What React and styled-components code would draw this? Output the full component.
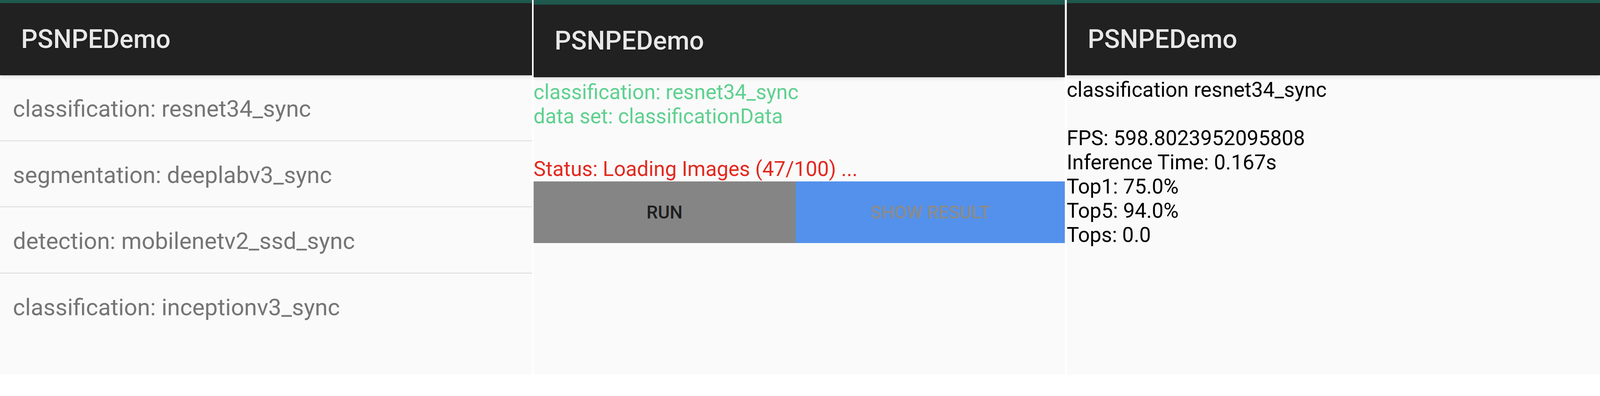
import React from 'react';
import styled, { createGlobalStyle } from 'styled-components';

// the shot is 4332 px wide: size everything against the viewport width
const px = n => `${(n * 100 / 4332).toFixed(4)}vw`;

const GlobalStyle = createGlobalStyle`
    html, body {
        margin: 0;
        padding: 0;
        background: #ffffff;
        overflow: hidden;
    }
    body {
        font-family: Roboto, "Noto Sans", sans-serif;
    }
`

const Screens = styled.div`
    display: grid;
    grid-template-columns: 1440fr 1439fr 1444fr;
    column-gap: ${px(4.5)};
    width: 100%;
    height: ${px(1015)};
    overflow: hidden;
`
const Phone = styled.div`
    display: flex;
    flex-direction: column;
    min-width: 0;
    background: #fafafa;
    height: ${px(1015)};
    overflow: hidden;
`
const StatusStrip = styled.div`
    height: ${props => px(props.h)};
    flex-shrink: 0;
    background: #1f5a4f;
`
const Toolbar = styled.div`
    position: relative;
    z-index: 1;
    height: ${px(196)};
    flex-shrink: 0;
    display: flex;
    align-items: center;
    padding-left: ${px(57)};
    background: #212121;
    box-shadow: 0 ${px(4)} ${px(10)} rgba(0, 0, 0, 0.12);
`
const Title = styled.h1`
    margin: 0;
    font-family: Roboto, sans-serif;
    font-weight: 500;
    font-size: ${px(70)};
    color: #e8e8e8;
    text-shadow: 0 ${px(2)} ${px(3)} rgba(0, 0, 0, 0.35);
`
const ModelList = styled.ul`
    margin: 0;
    padding: 0;
    list-style: none;
`
const ModelRow = styled.li`
    height: ${px(179)};
    display: flex;
    align-items: center;
    padding: ${px(6)} 0 0 ${px(35)};
    box-sizing: border-box;
    font-size: ${px(63)};
    color: #757575;
    white-space: nowrap;
    border-bottom: ${props => (props.last ? 'none' : `${px(3)} solid #dadada`)};
`
const Detail = styled.div`
    display: flex;
    flex-direction: column;
    padding-top: ${props => px(props.top)};
`
const Line = styled.div`
    font-size: ${px(56)};
    line-height: ${px(65.6)};
    color: ${props => props.color};
    margin-top: ${props => px(props.gap || 0)};
    white-space: pre;
`
const ButtonBar = styled.div`
    display: grid;
    grid-template-columns: 709fr 729fr;
    height: ${px(167)};
    margin-top: ${px(1)};
`
const ActionButton = styled.button`
    border: none;
    outline: none;
    margin: 0;
    padding: 0;
    font-family: Roboto, sans-serif;
    font-weight: 500;
    font-size: ${px(49)};
    text-transform: uppercase;
    background: ${props => props.bg};
    color: ${props => props.fg};
    cursor: pointer;
`

const models = [
    'classification: resnet34_sync',
    'segmentation: deeplabv3_sync',
    'detection: mobilenetv2_ssd_sync',
    'classification: inceptionv3_sync',
];

const resultText = `classification resnet34_sync

FPS: 598.8023952095808
Inference Time: 0.167s
Top1: 75.0%
Top5: 94.0%
Tops: 0.0`

const App = () => (
    <>
        <GlobalStyle />
        <Screens>
            <Phone>
                <StatusStrip h={8} />
                <Toolbar><Title>PSNPEDemo</Title></Toolbar>
                <ModelList>
                    {models.map((m, i) => (
                        <ModelRow key={m} last={i === models.length - 1}>{m}</ModelRow>
                    ))}
                </ModelList>
            </Phone>

            <Phone>
                <StatusStrip h={13} />
                <Toolbar><Title>PSNPEDemo</Title></Toolbar>
                <Detail top={8}>
                    <Line color="#5fd08f">classification: resnet34_sync</Line>
                    <Line color="#5fd08f">data set: classificationData</Line>
                    <Line color="#e2291f" gap={77}>Status: Loading Images (47/100) ...</Line>
                    <ButtonBar>
                        <ActionButton bg="#858585" fg="#1e1e1e">Run</ActionButton>
                        <ActionButton bg="#5391ec" fg="#8b8b8b">Show Result</ActionButton>
                    </ButtonBar>
                </Detail>
            </Phone>

            <Phone>
                <StatusStrip h={8} />
                <Toolbar><Title>PSNPEDemo</Title></Toolbar>
                <Detail top={6}>
                    <Line color="#000000">{resultText}</Line>
                </Detail>
            </Phone>
        </Screens>
    </>
);

export default App;
